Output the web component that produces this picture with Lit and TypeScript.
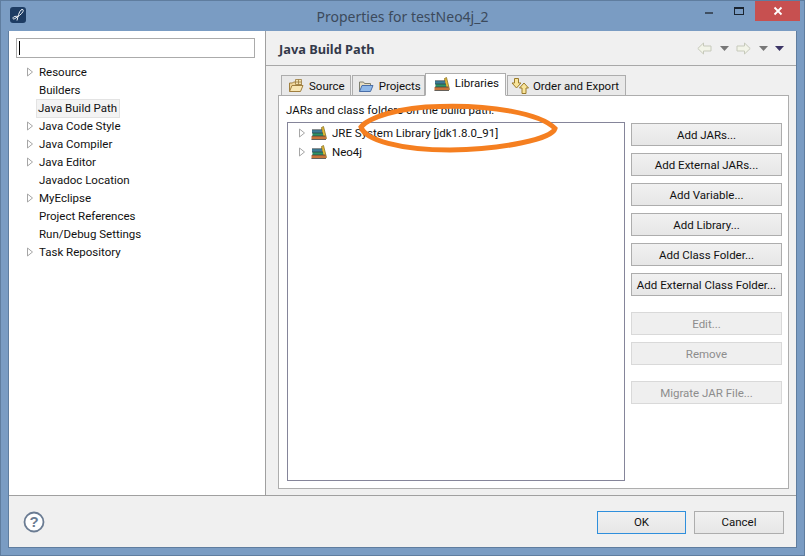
import { LitElement, html, css, svg } from "lit";
import { customElement } from "lit/decorators.js";

const arrowR = html`<svg class="tw" width="8" height="10" viewBox="0 0 8 10"><path d="M1.5 1 L6.5 5 L1.5 9 Z" fill="#fff" stroke="#a6a6a6"/></svg>`;
const books = html`<svg class="ic" width="16" height="16" viewBox="0 0 16 16">
  <path d="M10.500 2.500l2-1 3 12h-3z" fill="#e3bb3a" stroke="#7c6518" stroke-width=".7"/>
  <rect x="1" y="5" width="10" height="3" fill="#3d7d98"/>
  <rect x="1.500" y="8" width="10.500" height="3" fill="#2f9468"/>
  <rect x="0.500" y="11" width="14.500" height="3.500" fill="#c8743a"/>
  <path d="M1 4.700h10M1 8h11M1 11h13.500M.5 14.500h14.500" stroke="#2e3a3e" stroke-width=".7"/>
</svg>`;
const folderOpen = html`<svg class="ic" width="16" height="16" viewBox="0 0 16 16"><path d="M1.500 13.500V5h3l1-1h3v2h5v2" fill="#eed59a" stroke="#a07f3f"/><path d="M7.500 1.500h6v5h-6zM10.500 1.500v5M7.500 4h6" fill="#f3e3b3" stroke="#9a7b3c" stroke-width=".8"/><path d="M1.500 13.500L4 7.500h11l-2.500 6z" fill="#f8e6b3" stroke="#a07f3f"/></svg>`;
const projects = html`<svg class="ic" width="16" height="16" viewBox="0 0 16 16"><path d="M1.500 13.500V4h4l1 1.500h6V8" fill="#e6dcc0" stroke="#7f7f6f"/><path d="M1.500 13.500L4 7.500h11l-2.500 6z" fill="#8fb8e8" stroke="#4a6ea8"/></svg>`;
const order = html`<svg class="ic order" width="20" height="18" viewBox="0 0 20 18"><path d="M3.500 1.500h4V6h2.500L5.500 11 1 6h2.500z" fill="#f8e49a" stroke="#9a7b2c"/><path d="M11 16.500h4V11h2.500L13 6l-4.500 5H11z" fill="#f8e49a" stroke="#9a7b2c"/></svg>`;
const navArrow = (flip: boolean) => html`<svg width="15" height="13" viewBox="0 0 15 13" style=${flip ? "transform:scaleX(-1)" : ""}><path d="M.8 6.500L6.500 1v3h7.500v5H6.500v3z" fill="#f2f4e8" stroke="#c6c9bb"/></svg>`;
const tri = (c: string) => html`<svg width="9" height="5" viewBox="0 0 9 5"><path d="M0 0h9L4.500 5z" fill=${c}/></svg>`;
const sLogo = svg`<path d="M7 13.500C8 9 9 5 11 3c1.500-1.200 2.800-.5 2 1.500C12 7 8 9.500 5 11.500c-1.500 1-2.500.2-2-.8C3.500 9.500 6 9 8 9.500" fill="none" stroke="#eef3f8" stroke-width="1"/>`;

const tree = [
  ["Resource", 1], ["Builders", 0], ["Java Build Path", 0, 1], ["Java Code Style", 1], ["Java Compiler", 1],
  ["Java Editor", 1], ["Javadoc Location", 0], ["MyEclipse", 1], ["Project References", 0],
  ["Run/Debug Settings", 0], ["Task Repository", 1],
] as [string, number, number?][];

@customElement("app-root")
export class AppRoot extends LitElement {
  static styles = css`
    :host { display: block; width: 805px; height: 556px; font-family: Roboto, "Open Sans", sans-serif; font-size: 11.500px; color: #111; position: relative; overflow: hidden; }
    .win { width: 805px; height: 556px; box-sizing: border-box; background: #7a9cc3; border: 1px solid #5f7d9f; display: flex; flex-direction: column; }
    .title { height: 30px; flex: none; display: flex; align-items: center; padding-left: 9px; position: relative; }
    .title .t { position: absolute; left: 0; right: 0; top: 6px; text-align: center; font-size: 14px; line-height: 20px; color: #3c4a5c; font-family: "Noto Sans", sans-serif; }
    .logo { width: 16px; height: 16px; background: #1d3c63; border-radius: 3px; position: relative; top: -1px; }
    .ctl { position: absolute; top: 0; right: 0; display: flex; height: 20px; }
    .ctl .b { width: 30px; display: flex; align-items: center; justify-content: center; }
    .ctl .x { width: 45px; margin-left: 1px; margin-right: 4px; background: #c75050; color: #fff; }
    .min { width: 8px; height: 2px; background: #3f4f62; margin-top: 4px; }
    .max { width: 8px; height: 5px; border: 1.500px solid #1a2430; border-top-width: 2.500px; }
    .body { flex: 1; margin: 0 7px 7px; background: #f0f0f0; border: 1px solid #5f7d9f; border-top: none; display: flex; flex-direction: column; min-height: 0; }
    .main { height: 464px; flex: none; display: flex; border-bottom: 1px solid #a0a0a0; }
    .left { width: 256px; background: #fff; border-right: 1px solid #a0a0a0; padding: 7px 0 0 0; }
    .filter { margin-left: 7px; width: 239px; height: 20px; box-sizing: border-box; border: 1px solid #ababab; padding: 2px 0 2px 2px; }
    .filter i { display: block; width: 1px; height: 14px; background: #000; }
    .tree { margin-top: 5px; display: flex; flex-direction: column; }
    .row { height: 18px; display: flex; align-items: center; }
    .row .tw { margin-left: 17px; width: 8px; flex: none; }
    .row .sp { margin-left: 17px; width: 8px; flex: none; }
    .row .lb { margin-left: 4px; padding: 0 1px; line-height: 17px; white-space: nowrap; }
    .row.sel .lb { margin-left: 3px; background: #f3f3f3; outline: 1px solid #e3e3e3; padding: 0 2px 0 1px; }
    .right { flex: 1; min-width: 0; display: flex; flex-direction: column; }
    .hd { height: 35px; flex: none; box-sizing: border-box; border-bottom: 1px solid #a8a8a8; display: flex; align-items: center; padding: 0 12px 0 13px; }
    .hd b { font-size: 12.800px; font-weight: 700; color: #33394a; flex: 1; font-family: "Noto Sans", sans-serif; padding-top: 2px; }
    .nav { display: flex; align-items: center; gap: 7.500px; }
    .tabs { margin: 8px 0 0 13px; height: 21px; display: flex; align-items: flex-end; padding-left: 2px; position: relative; z-index: 1; }
    .tab { height: 20px; box-sizing: border-box; background: #e9e9e9; border: 1px solid #adadad; border-bottom: none; display: flex; align-items: center; padding: 0 5px 0 6px; gap: 5px; white-space: nowrap; margin-right: 1px; }
    .tab.p { padding: 0 3px 0 5px; margin-right: 0; }
    .tab.on { height: 23px; background: #fff; margin-bottom: -1px; padding: 0 6px 0 8px; margin-right: 0; border-bottom: 1px solid #fff; }
    .tab.on svg { margin-top: -2px; }
    .tab.on span { margin-top: -4px; }
    .tab.o { padding: 0 6px 0 3px; gap: 2px; margin-left: 1px; margin-right: 0; }
    .panel { margin: 0 7px 6px 12px; flex: 1; background: #fff; border: 1px solid #adadad; box-sizing: border-box; padding: 6px 8px 7px 8px; display: flex; flex-direction: column; min-height: 0; }
    .cap { line-height: 16px; height: 16px; margin-left: -1px; margin-bottom: 4px; white-space: nowrap; }
    .split { flex: 1; display: flex; gap: 6px; min-height: 0; }
    .list { width: 338px; box-sizing: border-box; border: 1px solid #85859a; flex: none; }
    .li { height: 19px; display: flex; align-items: center; padding-left: 10px; }
    .li .ic { margin: 1px 5px 0 5px; }
    .btns { width: 151px; display: flex; flex-direction: column; padding-top: 1px; }
    button { font: inherit; width: 151px; height: 23px; flex: none; box-sizing: border-box; margin: 0 0 7px; padding: 0; border: 1px solid #adadad; background: linear-gradient(#f1f1f1, #e6e6e6); color: #111; white-space: nowrap; }
    button:disabled { background: #efefef; border: 1px solid #d9d9d9; color: #8d8d8d; }
    .g1 { margin-top: 9px; }
    .g2 { margin-top: 9px; }
    .foot { flex: 1; display: flex; align-items: center; padding: 1px 12px 0 14px; }
    .foot svg { margin-right: auto; margin-top: -1px; }
    .foot button { width: 90px; margin: 0 0 0 8px; }
    .foot button.def { width: 89px; border-color: #2f8fdc; }
    .ring { position: absolute; left: 0; top: 0; pointer-events: none; }
  `;
  render() {
    return html`<div class="win">
      <div class="title">
        <div class="logo"><svg width="16" height="16" viewBox="0 0 16 16">${sLogo}</svg></div>
        <div class="t">Properties for testNeo4j_2</div>
        <div class="ctl">
          <div class="b"><div class="min"></div></div>
          <div class="b"><div class="max"></div></div>
          <div class="b x"><svg width="10" height="10" viewBox="0 0 10 10"><path d="M1.500 1.500l7 7M8.500 1.500l-7 7" stroke="#fff" stroke-width="1.800"/></svg></div>
        </div>
      </div>
      <div class="body">
        <div class="main">
          <div class="left">
            <div class="filter"><i></i></div>
            <div class="tree">
              ${tree.map(([t, a, s]) => html`<div class="row ${s ? "sel" : ""}">${a ? arrowR : html`<span class="sp"></span>`}<span class="lb">${t}</span></div>`)}
            </div>
          </div>
          <div class="right">
            <div class="hd"><b>Java Build Path</b>
              <div class="nav">${navArrow(false)}${tri("#777")}${navArrow(true)}${tri("#777")}${tri("#3c3566")}</div>
            </div>
            <div class="tabs">
              <div class="tab">${folderOpen}<span>Source</span></div>
              <div class="tab p">${projects}<span>Projects</span></div>
              <div class="tab on">${books}<span>Libraries</span></div>
              <div class="tab o">${order}<span>Order and Export</span></div>
            </div>
            <div class="panel">
              <div class="cap">JARs and class folders on the build path:</div>
              <div class="split">
                <div class="list">
                  <div class="li">${arrowR}${books}<span>JRE System Library [jdk1.8.0_91]</span></div>
                  <div class="li">${arrowR}${books}<span>Neo4j</span></div>
                </div>
                <div class="btns">
                  <button>Add JARs...</button>
                  <button>Add External JARs...</button>
                  <button>Add Variable...</button>
                  <button>Add Library...</button>
                  <button>Add Class Folder...</button>
                  <button>Add External Class Folder...</button>
                  <button class="g1" disabled>Edit...</button>
                  <button disabled>Remove</button>
                  <button class="g2" disabled>Migrate JAR File...</button>
                </div>
              </div>
            </div>
          </div>
        </div>
        <div class="foot">
          <svg width="22" height="22" viewBox="0 0 22 22"><circle cx="11" cy="11" r="9.500" fill="#fff" stroke="#6b7c93" stroke-width="1.800"/><text x="11" y="16" text-anchor="middle" font-size="15" font-weight="700" fill="#6b7c93" font-family="Liberation Sans">?</text></svg>
          <button class="def">OK</button><button>Cancel</button>
        </div>
      </div>
    </div>
    <svg class="ring" width="805" height="556" viewBox="0 0 805 556"><path fill="none" stroke="#f57f20" stroke-width="5" d="M361 127C368 118 398 107 440 106.500C490 105 540 113 555 128.500C552 139 505 149 450 150C400 150 365 140 361 127Z"/></svg>`;
  }
}
